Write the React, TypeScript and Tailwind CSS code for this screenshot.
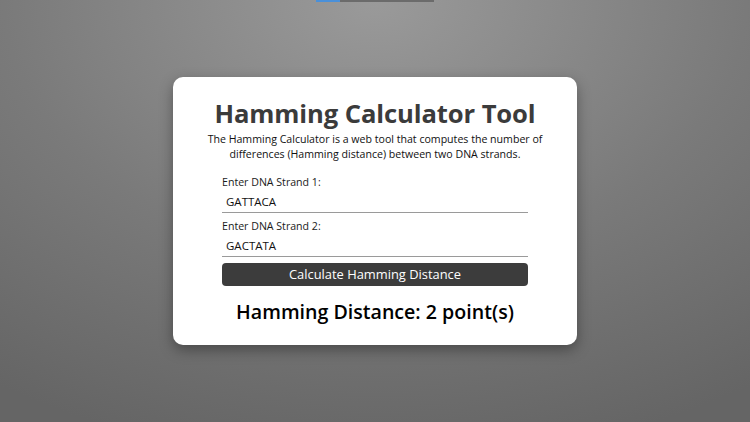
import React from "react";

export default function App() {
  return (
    <div
      className="relative min-h-screen w-full flex items-center justify-center bg-[radial-gradient(ellipse_90%_110%_at_50%_0%,#9a9a9a_0%,#7a7a7a_55%,#656565_100%)]"
      style={{ fontFamily: '"Open Sans", "Noto Sans", sans-serif' }}
    >
      <div className="absolute top-0 left-1/2 -translate-x-1/2 w-[118px] h-[2px] flex bg-[#6b6b6b]">
        <div className="w-[24px] h-full bg-[#4a90d9]" />
      </div>
      <div className="w-[404px] bg-white rounded-[10px] shadow-[0_5px_14px_rgba(0,0,0,0.35)] pt-[19px] pb-[21px] flex flex-col items-center">
        <h1 className="text-[25.6px] leading-[36px] font-bold text-[#3b3b3b] tracking-[-0.1px]">
          Hamming Calculator Tool
        </h1>
        <p className="text-[10.6px] leading-[15px] text-[#111] text-center w-[350px]">
          The Hamming Calculator is a web tool that computes the number of differences (Hamming distance) between two DNA strands.
        </p>
        <div className="w-[306px] mt-[12px] flex flex-col">
          <label className="text-[10.6px] leading-[16px] text-[#1a1a1a]">Enter DNA Strand 1:</label>
          <input
            readOnly
            value="GATTACA"
            className="h-[23px] border-b border-[#9a9a9a] px-[4px] text-[11.5px] text-[#111] outline-none font-medium"
          />
          <label className="mt-[5px] text-[10.6px] leading-[16px] text-[#1a1a1a]">Enter DNA Strand 2:</label>
          <input
            readOnly
            value="GACTATA"
            className="h-[23px] border-b border-[#9a9a9a] px-[4px] text-[11.5px] text-[#111] outline-none font-medium"
          />
          <button className="mt-[6px] h-[23px] rounded-[4px] bg-[#3c3c3c] text-white text-[12.9px] font-medium">
            Calculate Hamming Distance
          </button>
        </div>
        <div className="mt-[14px] text-[19.6px] leading-[24px] font-semibold text-black">
          Hamming Distance: 2 point(s)
        </div>
      </div>
    </div>
  );
}
